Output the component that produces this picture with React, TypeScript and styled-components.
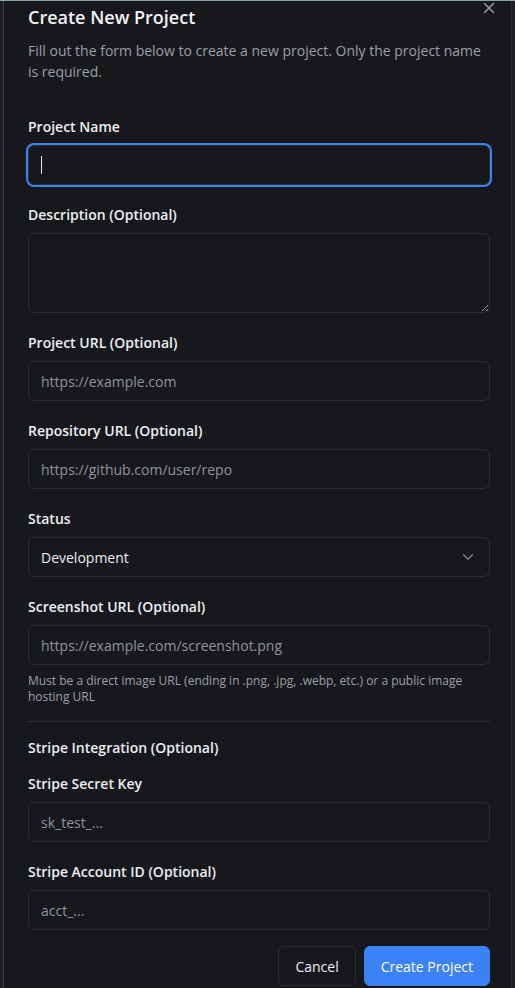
import React from 'react'
import styled, { createGlobalStyle } from 'styled-components'
import { ChevronDown, X } from 'lucide-react'

const GlobalStyle = createGlobalStyle`
    * {
        box-sizing: border-box;
    }

    body {
        margin: 0;
        background: #1d1f23;
        font-family: "Open Sans", "Noto Sans", sans-serif;
        -webkit-font-smoothing: antialiased;
    }
`

const Page = styled.div`
    min-height: 100vh;
    border-top: 1px solid #84a9a7;
    padding-left: 3px;
`

const Dialog = styled.div`
    position: relative;
    width: 509px;
    min-height: calc(100vh - 1px);
    background: #17181c;
    border-left: 1px solid #3b3e43;
    border-right: 1px solid #26282c;
    padding: 2px 21px 0 24px;
`

const CloseButton = styled.button`
    position: absolute;
    top: -2px;
    right: 13px;
    display: flex;
    padding: 0;
    border: none;
    background: none;
    color: #a3a5aa;
    cursor: pointer;
`

const Header = styled.div`
    display: flex;
    flex-direction: column;
    gap: 9px;
    margin-bottom: 35px;
`

const Title = styled.h2`
    margin: 0;
    font-size: 18px;
    line-height: 28px;
    font-weight: 600;
    color: #f2f3f5;
`

const Subtitle = styled.p`
    margin: 0;
    font-size: 14px;
    line-height: 21px;
    color: #9c9fa5;
`

const Stack = styled.div`
    display: flex;
    flex-direction: column;
    gap: 20px;
`

const Field = styled.div`
    display: flex;
    flex-direction: column;
    gap: 8px;
`

const Label = styled.label`
    font-size: 14px;
    line-height: 20px;
    font-weight: 600;
    color: #eceef1;
`

const InputWrap = styled.div`
    position: relative;
`

const Input = styled.input<{ $focused?: boolean }>`
    width: 100%;
    height: 40px;
    padding: 0 12px;
    border-radius: 6px;
    border: 1px solid #2b2d32;
    background: #17181c;
    color: #eceef1;
    font-family: inherit;
    font-size: 14px;
    outline: none;
    box-shadow: ${p => p.$focused ? '0 0 0 2px #3b82f6' : 'none'};

    &::placeholder {
        color: #8f929a;
    }
`

const Caret = styled.span`
    position: absolute;
    left: 13px;
    top: 11px;
    width: 1px;
    height: 18px;
    background: #e8e9ec;
`

const TextArea = styled.textarea`
    width: 100%;
    height: 80px;
    padding: 8px 12px;
    border-radius: 6px;
    border: 1px solid #2b2d32;
    background: #17181c;
    color: #eceef1;
    font-family: inherit;
    font-size: 14px;
    outline: none;
    display: block;
`

const SelectBox = styled.div`
    display: flex;
    align-items: center;
    justify-content: space-between;
    height: 40px;
    padding: 0 12px;
    border-radius: 6px;
    border: 1px solid #2b2d32;
    font-size: 14px;
    color: #eceef1;

    svg {
        color: #8b8e95;
    }
`

const Hint = styled.p`
    margin: 0;
    font-size: 12px;
    line-height: 16px;
    color: #9c9fa5;
`

const Section = styled.div`
    margin-top: -4px;
    padding-top: 16px;
    border-top: 1px solid #2b2d32;
`

const SectionTitle = styled.h3`
    margin: 0 0 16px;
    font-size: 14px;
    line-height: 20px;
    font-weight: 600;
    color: #eceef1;
`

const Footer = styled.div`
    display: flex;
    justify-content: flex-end;
    gap: 8px;
    margin-top: 16px;
`

const Button = styled.button<{ $primary?: boolean }>`
    height: 40px;
    padding: 0 16px;
    border-radius: 6px;
    border: 1px solid ${p => p.$primary ? '#3b82f6' : '#2b2d32'};
    background: ${p => p.$primary ? '#3b82f6' : '#17181c'};
    color: ${p => p.$primary ? '#ffffff' : '#eceef1'};
    font-family: inherit;
    font-size: 14px;
    font-weight: 500;
    cursor: pointer;
`

const fields = [
    { label: 'Project URL (Optional)', placeholder: 'https://example.com' },
    { label: 'Repository URL (Optional)', placeholder: 'https://github.com/user/repo' },
]

export default function App() {
    return (
        <Page>
            <GlobalStyle />
            <Dialog>
                <CloseButton aria-label="Close"><X size={18} strokeWidth={1.8} /></CloseButton>

                <Header>
                    <Title>Create New Project</Title>
                    <Subtitle>Fill out the form below to create a new project. Only the project name is required.</Subtitle>
                </Header>

                <Stack>
                    <Field>
                        <Label>Project Name</Label>
                        <InputWrap>
                            <Input $focused />
                            <Caret />
                        </InputWrap>
                    </Field>

                    <Field>
                        <Label>Description (Optional)</Label>
                        <TextArea />
                    </Field>

                    {fields.map(f => (
                        <Field key={f.label}>
                            <Label>{f.label}</Label>
                            <Input placeholder={f.placeholder} />
                        </Field>
                    ))}

                    <Field>
                        <Label>Status</Label>
                        <SelectBox>
                            <span>Development</span>
                            <ChevronDown size={18} strokeWidth={1.5} />
                        </SelectBox>
                    </Field>

                    <Field>
                        <Label>Screenshot URL (Optional)</Label>
                        <Input placeholder="https://example.com/screenshot.png" />
                        <Hint>Must be a direct image URL (ending in .png, .jpg, .webp, etc.) or a public image hosting URL</Hint>
                    </Field>

                    <Section>
                        <SectionTitle>Stripe Integration (Optional)</SectionTitle>
                        <Stack>
                            <Field>
                                <Label>Stripe Secret Key</Label>
                                <Input placeholder="sk_test_..." />
                            </Field>
                            <Field>
                                <Label>Stripe Account ID (Optional)</Label>
                                <Input placeholder="acct_..." />
                            </Field>
                        </Stack>
                    </Section>
                </Stack>

                <Footer>
                    <Button>Cancel</Button>
                    <Button $primary>Create Project</Button>
                </Footer>
            </Dialog>
        </Page>
    )
}
